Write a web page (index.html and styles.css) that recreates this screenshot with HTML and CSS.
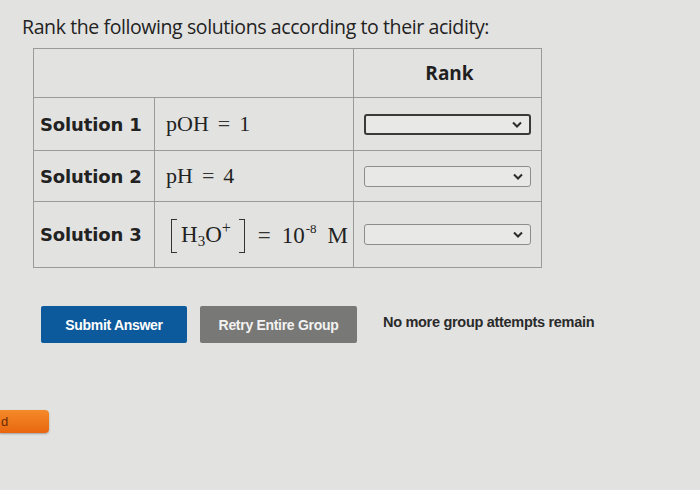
FILE: index.html
```html
<!DOCTYPE html>
<html lang="en">
<head>
  <meta charset="UTF-8" />
  <meta name="viewport" content="width=device-width, initial-scale=1.0" />
  <title>Rank the solutions</title>
  <link rel="stylesheet" href="styles.css">
</head>
<body>
  <div class="question">
    <p class="prompt">Rank the following solutions according to their acidity:</p>

    <table class="rank-table">
      <tr class="head-row">
        <th></th>
        <th class="rank-head">Rank</th>
      </tr>
      <tr class="row-1">
        <td class="solution-cell">
          <div class="solution">
            <span class="label">Solution 1</span>
            <span class="math"><span>pOH<span class="eq">=</span>1</span></span>
          </div>
        </td>
        <td class="pick-cell">
          <div class="select focused">
            <svg class="chev" viewBox="0 0 10 6"><path d="M1 1l4 4 4-4" /></svg>
          </div>
        </td>
      </tr>
      <tr class="row-2">
        <td class="solution-cell">
          <div class="solution">
            <span class="label">Solution 2</span>
            <span class="math"><span>pH<span class="eq">=</span>4</span></span>
          </div>
        </td>
        <td class="pick-cell">
          <div class="select">
            <svg class="chev" viewBox="0 0 10 6"><path d="M1 1l4 4 4-4" /></svg>
          </div>
        </td>
      </tr>
      <tr class="row-3">
        <td class="solution-cell">
          <div class="solution">
            <span class="label">Solution 3</span>
            <span class="math">
              <span class="bracket left"></span>
              <span class="ion">H<sub>3</sub>O<sup>+</sup></span>
              <span class="bracket right"></span>
              <span><span class="eq">=</span>10<sup class="exp">-8</sup><span class="unit">M</span></span>
            </span>
          </div>
        </td>
        <td class="pick-cell">
          <div class="select">
            <svg class="chev" viewBox="0 0 10 6"><path d="M1 1l4 4 4-4" /></svg>
          </div>
        </td>
      </tr>
    </table>

    <div class="actions">
      <button class="btn submit">Submit Answer</button>
      <button class="btn retry">Retry Entire Group</button>
      <span class="attempts">No more group attempts remain</span>
    </div>
  </div>

  <!-- side tab -->
  <div class="side-tab">d</div>
</body>
</html>
```

FILE: styles.css
```css
* { box-sizing: border-box; }

body {
  margin: 0;
  background-color: #e2e2e1;
  font-family: 'Open Sans', sans-serif;
  color: #1f1f1f;
  min-height: 490px;
}

.question {
  padding: 13px 0 0 22px;
}

.prompt {
  margin: 0;
  font-size: 19.5px;
  letter-spacing: -0.4px;
  line-height: 28px;
  color: #222;
}

.rank-table {
  margin: 7px 0 0 11px;
  border-collapse: collapse;
  width: 509px;
}

.rank-table th,
.rank-table td {
  border: 1px solid #9a9a9a;
  padding: 0;
}

.head-row th { height: 49px; }

.rank-head {
  width: 188px;
  font-size: 19px;
  font-weight: 700;
  text-align: center;
  padding-left: 4px !important;
}

.row-1 td { height: 53px; }
.row-2 td { height: 51px; }
.row-3 td { height: 66px; }

.solution {
  display: flex;
  align-items: stretch;
  height: 100%;
}

.solution-cell { height: inherit; }

.label {
  width: 121px;
  flex: none;
  display: flex;
  align-items: center;
  padding-left: 6px;
  border-right: 1px solid #9a9a9a;
  font-family: 'DejaVu Sans', Verdana, sans-serif;
  font-weight: 700;
  font-size: 18px;
  letter-spacing: -0.15px;
  color: #222;
  white-space: nowrap;
}

.math {
  display: flex;
  align-items: center;
  padding-left: 11px;
  font-family: 'Liberation Serif', 'Times New Roman', serif;
  font-size: 22px;
  color: #222;
  white-space: nowrap;
}

.math .eq {
  margin: 0 9px;
  color: #333;
}

.math sub { font-size: 15px; vertical-align: -4px; }
.math sup { font-size: 16px; vertical-align: 9px; }
.math sup.exp { font-size: 13px; vertical-align: 10px; margin-left: 1px; }
.math .unit { margin-left: 11px; }

.bracket {
  width: 6px;
  height: 34px;
  border: 1.5px solid #333;
  margin-top: 3px;
}

.row-3 .math { padding-left: 16px; font-size: 23px; }
.row-3 .math .eq { margin: 0 11px 0 12px; }
.bracket.left { border-right: none; margin-right: 4px; }
.bracket.right { border-left: none; margin-left: 8px; margin-right: 1px; }

.pick-cell {
  padding: 0 10px 0 10px !important;
  vertical-align: middle;
}

.select {
  height: 21px;
  border: 1.5px solid #8d8d8d;
  border-radius: 3px;
  background: #e8e8e7;
  display: flex;
  align-items: center;
  justify-content: flex-end;
  padding-right: 7px;
}

.select.focused {
  border: 2px solid #3a3a3a;
}

.chev {
  width: 10px;
  height: 7px;
  fill: none;
  stroke: #2b2b2b;
  stroke-width: 2;
}

.actions {
  display: flex;
  align-items: center;
  margin: 38px 0 0 19px;
}

.btn {
  height: 37px;
  border: none;
  border-radius: 2px;
  color: #fff;
  font-family: 'Liberation Sans', Arial, sans-serif;
  font-weight: 700;
  font-size: 14px;
  letter-spacing: -0.3px;
  padding: 0;
  white-space: nowrap;
  cursor: pointer;
}

.submit {
  width: 146px;
  background-color: #0c5a9b;
}

.retry {
  width: 157px;
  margin-left: 13px;
  background-color: #787876;
  color: #f2f2f2;
}

.attempts {
  margin-left: 26px;
  margin-top: -6px;
  font-family: 'Liberation Sans', Arial, sans-serif;
  font-weight: 700;
  font-size: 14.5px;
  letter-spacing: -0.3px;
  color: #2a2a2a;
  white-space: nowrap;
}

.side-tab {
  position: absolute;
  left: 0;
  top: 410px;
  width: 49px;
  height: 23px;
  border-radius: 0 4px 4px 0;
  background: linear-gradient(#f58a2a, #e8660f);
  box-shadow: 0 1px 2px rgba(0, 0, 0, 0.3);
  color: #6b2a00;
  font-family: 'Liberation Sans', Arial, sans-serif;
  font-size: 13px;
  line-height: 23px;
  padding-left: 1px;
}
```
